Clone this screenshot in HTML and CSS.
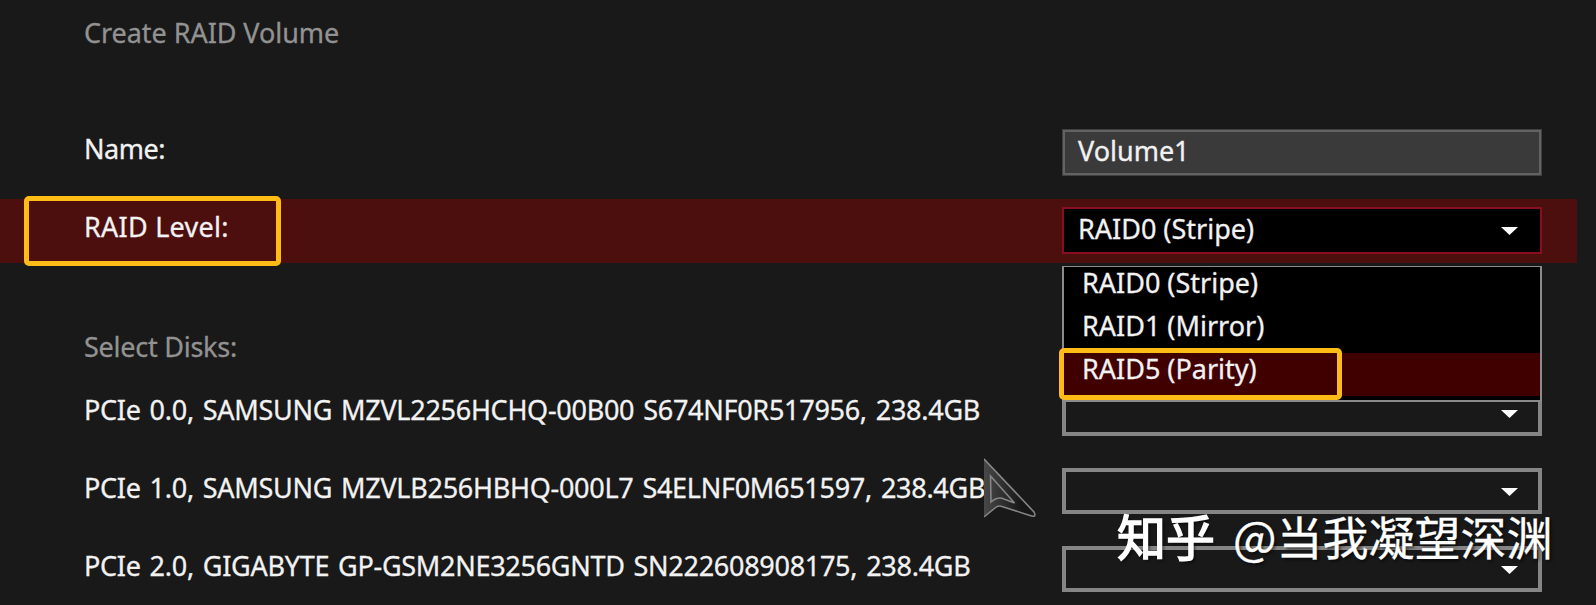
FILE: index.html
```html
<!DOCTYPE html>
<html lang="en">
<head>
    <meta charset="UTF-8">
    <meta name="viewport" content="width=device-width, initial-scale=1.0">
    <title>Create RAID Volume</title>
    <link rel="stylesheet" href="styles.css">
</head>
<body>

    <main class="page">
        <h1 class="heading">Create RAID Volume</h1>

        <!-- VOLUME SETTINGS -->
        <section class="rows">
            <div class="row">
                <span class="label name">Name:</span>
                <div class="field input">Volume1</div>
            </div>
            <div class="row active">
                <span class="label raid-level">RAID Level:</span>
                <div class="field select open">
                    <span>RAID0 (Stripe)</span>
                    <svg class="arrow" viewBox="0 0 17 8"><path d="M0 0h17L8.5 8z"/></svg>
                    <div class="dropdown">
                        <div class="option">RAID0 (Stripe)</div>
                        <div class="option">RAID1 (Mirror)</div>
                        <div class="option selected">RAID5 (Parity)<span class="mark mark-option"></span></div>
                    </div>
                </div>
                <span class="mark mark-label"></span>
            </div>
        </section>

        <!-- DISKS -->
        <h2 class="heading disks-heading">Select Disks:</h2>
        <section class="rows">
            <div class="row">
                <span class="label disk">PCIe 0.0, SAMSUNG MZVL2256HCHQ-00B00 S674NF0R517956, 238.4GB</span>
                <div class="field select"><svg class="arrow" viewBox="0 0 17 8"><path d="M0 0h17L8.5 8z"/></svg></div>
            </div>
            <div class="row">
                <span class="label disk">PCIe 1.0, SAMSUNG MZVLB256HBHQ-000L7 S4ELNF0M651597, 238.4GB</span>
                <div class="field select"><svg class="arrow" viewBox="0 0 17 8"><path d="M0 0h17L8.5 8z"/></svg></div>
            </div>
            <div class="row">
                <span class="label disk">PCIe 2.0, GIGABYTE GP-GSM2NE3256GNTD SN222608908175, 238.4GB</span>
                <div class="field select"><svg class="arrow" viewBox="0 0 17 8"><path d="M0 0h17L8.5 8z"/></svg></div>
            </div>
        </section>

        <svg class="cursor" viewBox="0 0 54 61">
            <defs>
                <linearGradient id="shade" x1="0" x2="1">
                    <stop offset="0" stop-color="#484848"/>
                    <stop offset="0.75" stop-color="#161616"/>
                </linearGradient>
            </defs>
            <path class="cursor-body" d="M0 0 L51 55 Q51 59 46 57.500 L17 48 Q14 47 11 50 L0 59z"/>
            <path class="cursor-line" d="M0 1 L50 54 Q53 60 46 57.500 L18 48.500 Q14 47 11 50 L0 59"/>
            <path class="cursor-line" d="M6.500 18 L30.500 45 L20 41 Q14 38 7 44z"/>
        </svg>

        <div class="watermark" lang="zh-CN">
            <span class="brand">知乎</span>
            <span class="author">@当我凝望深渊</span>
        </div>
    </main>

</body>
</html>
```

FILE: styles.css
```css
body {
    margin: 0;
    background-color: #191919;
    color: #f2f2f2;
    font-family: "Noto Sans", "Noto Sans CJK SC", sans-serif;
    font-size: 27px;
}

.page {
    position: relative;
    height: 605px;
    overflow: hidden;
    box-sizing: border-box;
    padding-top: 6px;
    -webkit-text-stroke: 0.3px;
}

.heading {
    margin: 0 0 62px 84px;
    font-size: 27px;
    font-weight: normal;
    line-height: 53px;
    letter-spacing: -0.05px;
    color: #929292;
}

.disks-heading {
    margin: 57px 0 9px 84px;
    letter-spacing: -0.25px;
}

.rows {
    display: flex;
    flex-direction: column;
    gap: 14px;
}

.row {
    position: relative;
    display: flex;
    justify-content: space-between;
    box-sizing: border-box;
    width: 1577px;
    height: 64px;
    padding: 8px 35px 8px 84px;
}

.row.active {
    background-color: #4d0e0e;
}

.label {
    margin-top: -7px;
    line-height: 53px;
    white-space: nowrap;
}

.name {
    letter-spacing: -0.5px;
}

.raid-level {
    letter-spacing: 0.25px;
}

.disk {
    letter-spacing: -0.28px;
    word-spacing: 2.2px;
}

.field {
    position: relative;
    display: flex;
    justify-content: space-between;
    box-sizing: border-box;
    width: 480px;
    height: 46px;
    border: 4px solid #858585;
    padding: 0 20px 0 12px;
    line-height: 36px;
}

.input {
    height: 47px;
    border: 1px solid #404040;
    background-color: #3a3a3a;
    box-shadow: inset 0 0 0 2px #636363;
    padding-left: 15px;
    line-height: 41px;
}

.open {
    height: 47px;
    border: 2px solid #870f20;
    background-color: #000;
    padding: 0 22px 0 14px;
    line-height: 39px;
}

.arrow {
    width: 17px;
    height: 8px;
    margin: 16px 0 0 auto;
    fill: #fff;
}

.open .arrow {
    margin-top: 18px;
}

.dropdown {
    position: absolute;
    top: 57px;
    left: -2px;
    z-index: 2;
    box-sizing: border-box;
    width: 480px;
    height: 136px;
    border: 2px solid #8b8b8b;
    border-top-width: 1px;
    background-color: #000;
}

.option {
    position: relative;
    height: 43px;
    padding-left: 18px;
    line-height: 32px;
}

.option.selected {
    background-color: #400000;
}

/* yellow highlight frames */
.mark {
    position: absolute;
    box-sizing: border-box;
    border: 5px solid #ffbb16;
    border-radius: 5px;
}

.mark-label {
    top: -3px;
    left: 24px;
    width: 257px;
    height: 70px;
}

.mark-option {
    top: -5px;
    left: -5px;
    width: 283px;
    height: 52px;
}

.cursor {
    position: absolute;
    top: 458px;
    left: 984px;
    z-index: 3;
    width: 54px;
    height: 61px;
}

.cursor-body {
    fill: url(#shade);
}

.cursor-line {
    fill: none;
    stroke: #858585;
    stroke-width: 1.6;
}

.watermark {
    position: absolute;
    top: 500px;
    left: 1117px;
    z-index: 4;
    display: flex;
    gap: 18px;
    color: #fff;
    font-family: "Noto Sans CJK SC", sans-serif;
    font-size: 46px;
    line-height: 70px;
    white-space: nowrap;
    text-shadow: 2px 2px 3px rgba(0, 0, 0, 0.6);
}

.brand {
    font-size: 49px;
    -webkit-text-stroke: 1.5px;
}
```
